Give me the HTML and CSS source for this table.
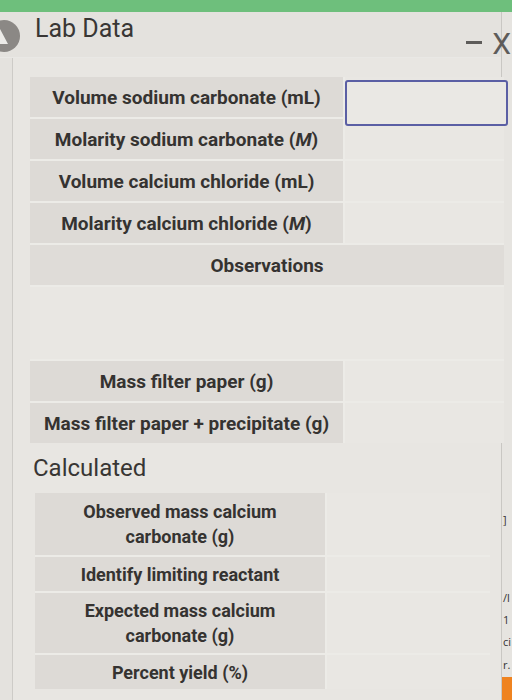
FILE: index.html
```html
<!DOCTYPE html>
<html>
<head>
<meta charset="utf-8">
<link rel="stylesheet" href="styles.css">
</head>
<body>
<div class="topbar"></div>
<div class="page">
  <div class="window">
    <div class="header">
      <div class="badge"><svg width="32" height="32" viewBox="0 0 32 32"><circle cx="16" cy="16" r="16" fill="#8b8885"/><path d="M12 9 L20 24 L4 24 Z" fill="#ecebe8"/></svg></div>
      <div class="title">Lab Data</div>
      <div class="controls"><span class="min" aria-label="minimize"></span><span class="close">X</span></div>
    </div>
    <div class="content">
      <div class="table t1">
        <div class="row"><div class="label">Volume sodium carbonate (mL)</div><div class="value"><div class="input"></div></div></div>
        <div class="row"><div class="label">Molarity sodium carbonate (<i>M</i>)</div><div class="value"></div></div>
        <div class="row"><div class="label">Volume calcium chloride (mL)</div><div class="value"></div></div>
        <div class="row"><div class="label">Molarity calcium chloride (<i>M</i>)</div><div class="value"></div></div>
        <div class="row obs-head"><div class="label full">Observations</div></div>
        <div class="row obs-body"><div class="value full"></div></div>
        <div class="row"><div class="label">Mass filter paper (g)</div><div class="value"></div></div>
        <div class="row"><div class="label">Mass filter paper + precipitate (g)</div><div class="value"></div></div>
      </div>
      <h2 class="section">Calculated</h2>
      <div class="table t2">
        <div class="row tall"><div class="label">Observed mass calcium<br>carbonate (g)</div><div class="value"></div></div>
        <div class="row"><div class="label">Identify limiting reactant</div><div class="value"></div></div>
        <div class="row tall2"><div class="label">Expected mass calcium<br>carbonate (g)</div><div class="value"></div></div>
        <div class="row"><div class="label">Percent yield (%)</div><div class="value"></div></div>
      </div>
    </div>
  </div>
  <div class="side">
    <span class="s1">]</span>
    <span class="s2">/l</span>
    <span class="s3">1</span>
    <span class="s4">ci</span>
    <span class="s5">r.</span>
    <span class="orange"></span>
  </div>
</div>
</body>
</html>
```
FILE: styles.css
```css
* { box-sizing: border-box; }
html, body { margin: 0; padding: 0; }
body {
  width: 512px;
  height: 700px;
  overflow: hidden;
  background: #e6e4e0;
  font-family: Roboto, "Liberation Sans", sans-serif;
  color: #333130;
}
.topbar {
  height: 12px;
  background: #6ebf7c;
}
.page {
  display: flex;
  height: 688px;
}
.window {
  width: 502px;
  flex: none;
  background: #e4e2de;
  border-right: 1px solid #c9c7c3;
}
.header {
  height: 46px;
  display: flex;
  align-items: center;
  border-bottom: 1px solid #e9e8e5;
}
.badge {
  width: 32px;
  height: 32px;
  margin-left: -12px;
  margin-top: 2px;
}
.title {
  font-size: 25px;
  margin-left: 15px;
  margin-top: -12px;
  color: #393735;
}
.controls {
  margin-left: auto;
  margin-right: -10px;
  margin-top: 18px;
  font-size: 30px;
  color: #5e5c5a;
  display: flex;
  align-items: center;
  gap: 10px;
}
.min {
  display: block;
  width: 16px;
  height: 3px;
  background: #5e5c5a;
  margin-top: -2px;
}
.content {
  margin-left: 12px;
  border-left: 1px solid #cdcbc7;
  background: #e8e6e2;
  padding: 19px 0 0 17px;
  height: 642px;
}
.table {
  display: flex;
  flex-direction: column;
  gap: 2px;
  background: #ecebe7;
}
.t1 { width: 474px; }
.row {
  display: flex;
  height: 40px;
}
.label {
  width: 313px;
  flex: none;
  background: #dddad6;
  display: flex;
  align-items: center;
  justify-content: center;
  text-align: center;
  font-weight: bold;
  font-size: 19px;
  line-height: 25px;
  color: #353331;
}
.label i { font-style: italic; }
.value {
  flex: 1;
  background: #e9e7e3;
  margin-left: 2px;
  position: relative;
}
.label.full { width: 100%; background: #dfdcd8; }
.value.full { margin-left: 0; }
.obs-body { height: 72px; }
.input {
  position: absolute;
  z-index: 2;
  left: 0;
  top: 3px;
  width: 163px;
  height: 46px;
  border: 2px solid #5b5fa4;
  border-radius: 3px;
  background: #eae8e4;
}
.section {
  font-weight: normal;
  font-size: 24px;
  margin: 10px 0 0 3px;
  height: 40px;
  line-height: 30px;
  color: #383634;
}
.t2 {
  width: 455px;
  margin-left: 5px;
}
.t2 .label { width: 290px; font-size: 18px; }
.t2 .row { height: 34px; }
.t2 .row.tall { height: 62px; }
.t2 .row.tall2 { height: 60px; }
.side {
  position: relative;
  flex: 1;
  overflow: hidden;
  font-family: "Open Sans", sans-serif;
  font-size: 11px;
  color: #333;
}
.side span { position: absolute; left: 1px; }
.s1 { top: 500px; }
.s2 { top: 578px; }
.s3 { top: 600px; }
.s4 { top: 622px; }
.s5 { top: 645px; }
.orange {
  top: 665px;
  left: 0 !important;
  width: 12px;
  height: 23px;
  background: #ef8320;
}
```
